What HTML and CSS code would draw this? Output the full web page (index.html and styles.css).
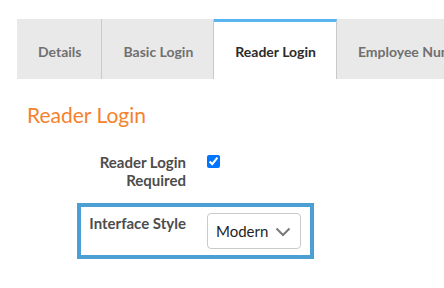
FILE: index.html
```html
<!DOCTYPE html>
<html lang="en">
<head>
  <meta charset="UTF-8">
  <meta name="viewport" content="width=device-width, initial-scale=1.0">
  <title>Reader Login</title>
  <link rel="stylesheet" href="styles.css">
</head>
<body>
  <div class="tabs">
    <div class="tab">Details</div>
    <div class="tab">Basic Login</div>
    <div class="tab active">Reader Login</div>
    <div class="tab">Employee Number</div>
  </div>

  <h2 class="section-title">Reader Login</h2>

  <div class="field">
    <label class="field-label" for="reader-required">Reader Login Required</label>
    <div class="field-control">
      <input type="checkbox" id="reader-required" class="check" checked>
    </div>
  </div>

  <!-- highlighted row -->
  <div class="field highlight">
    <label class="field-label" for="interface-style">Interface Style</label>
    <div class="field-control">
      <span class="select-wrap">
        <select id="interface-style" class="select">
          <option>Modern</option>
          <option>Classic</option>
        </select>
        <svg class="chevron" width="16" height="10" viewBox="0 0 16 10">
          <polyline points="1.5,1.5 8,8 14.5,1.5" fill="none" stroke="#7a7a7a" stroke-width="2"/>
        </svg>
      </span>
    </div>
  </div>
</body>
</html>
```

FILE: styles.css
```css
html, body {
  margin: 0;
  padding: 0;
  background: #fff;
  font-family: Lato, "Open Sans", sans-serif;
  overflow: hidden;
}
body {
  width: 444px;
  height: 288px;
}
.tabs {
  display: flex;
  margin: 19px 0 0 17px;
  height: 60px;
  background: #e9e9e9;
  white-space: nowrap;
  overflow: hidden;
}
.tab {
  padding: 24px 20px 19px 21px;
  font-size: 14px;
  line-height: 17px;
  font-weight: 700;
  color: #707070;
  border-right: 1px solid #c9c9c9;
  flex: 0 0 auto;
}
.tab.active {
  background: #fff;
  color: #2b2b2b;
  border-top: 3px solid #5ab4f0;
  padding-top: 21px;
}
.section-title {
  margin: 23px 0 0 0;
  padding-left: 27px;
  font-size: 21px;
  line-height: 26px;
  font-weight: 400;
  color: #f4822e;
}
.field {
  display: flex;
  align-items: flex-start;
  width: fit-content;
  margin: 14px 0 0 77px;
  border: 4px solid transparent;
  padding: 6px 9px 6px 7px;
}
.field + .field {
  margin-top: 4px;
}
.field.highlight {
  border-color: #4b9fd3;
}
.field-label {
  width: 98px;
  padding-top: 1px;
  text-align: right;
  font-size: 15px;
  line-height: 18px;
  font-weight: 700;
  color: #4d4d4d;
}
.field-control {
  margin-left: 21px;
  display: flex;
}
.check {
  margin: 3px 0 0 0;
  width: 13px;
  height: 13px;
}
.select-wrap {
  position: relative;
  display: inline-block;
}
.select {
  appearance: none;
  -webkit-appearance: none;
  width: 94px;
  height: 36px;
  box-sizing: border-box;
  border: 1px solid #cacaca;
  border-radius: 4px;
  background: #fff;
  padding: 0 0 0 8px;
  font-family: Lato, "Open Sans", sans-serif;
  font-size: 15px;
  color: #1e1e1e;
}
.chevron {
  position: absolute;
  left: 68px;
  top: 14px;
  pointer-events: none;
}
```
